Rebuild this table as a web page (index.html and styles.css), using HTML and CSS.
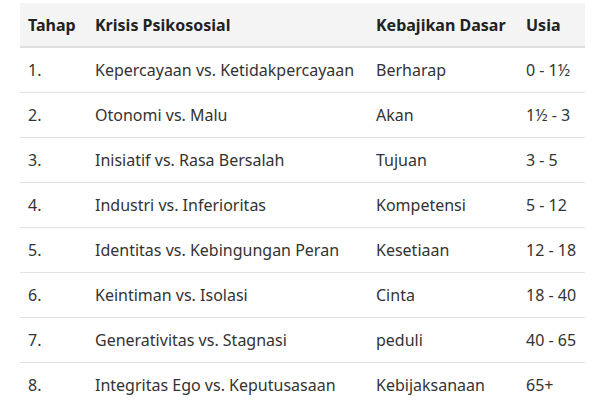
FILE: index.html
```html
<!DOCTYPE html>
<html lang="id">
<head>
<meta charset="utf-8">
<title>Tahap Psikososial</title>
<link rel="stylesheet" href="styles.css">
</head>
<body>
<table class="stages">
  <thead>
    <tr>
      <th class="c-stage">Tahap</th>
      <th class="c-crisis">Krisis Psikososial</th>
      <th class="c-virtue">Kebajikan Dasar</th>
      <th class="c-age">Usia</th>
    </tr>
  </thead>
  <tbody>
    <tr><td>1.</td><td>Kepercayaan vs. Ketidakpercayaan</td><td>Berharap</td><td>0 - 1½</td></tr>
    <tr><td>2.</td><td>Otonomi vs. Malu</td><td>Akan</td><td>1½ - 3</td></tr>
    <tr><td>3.</td><td>Inisiatif vs. Rasa Bersalah</td><td>Tujuan</td><td>3 - 5</td></tr>
    <tr><td>4.</td><td>Industri vs. Inferioritas</td><td>Kompetensi</td><td>5 - 12</td></tr>
    <tr><td>5.</td><td>Identitas vs. Kebingungan Peran</td><td>Kesetiaan</td><td>12 - 18</td></tr>
    <tr><td>6.</td><td>Keintiman vs. Isolasi</td><td>Cinta</td><td>18 - 40</td></tr>
    <tr><td>7.</td><td>Generativitas vs. Stagnasi</td><td>peduli</td><td>40 - 65</td></tr>
    <tr><td>8.</td><td>Integritas Ego vs. Keputusasaan</td><td>Kebijaksanaan</td><td>65+</td></tr>
  </tbody>
</table>
</body>
</html>
```
FILE: styles.css
```css
html, body {
  margin: 0;
  background: #ffffff;
}
body {
  padding: 3px 17px 0 20px;
  font-family: "Noto Sans", "Open Sans", sans-serif;
  font-size: 16px;
  color: #333333;
}
.stages {
  width: 565px;
  border-collapse: collapse;
  table-layout: fixed;
}
.stages th,
.stages td {
  box-sizing: border-box;
  text-align: left;
  padding: 0 8px;
  vertical-align: middle;
  white-space: nowrap;
}
.stages th {
  height: 44px;
  background: #f4f4f4;
  font-weight: 700;
  color: #222222;
  border-bottom: 2px solid #dedede;
}
.stages td {
  height: 45px;
  border-bottom: 1px solid #e2e2e2;
}
.stages tbody tr:last-child td {
  border-bottom: none;
}
.c-stage { width: 67px; }
.c-crisis { width: 281px; }
.c-virtue { width: 150px; }
.c-age { width: 67px; }
```
